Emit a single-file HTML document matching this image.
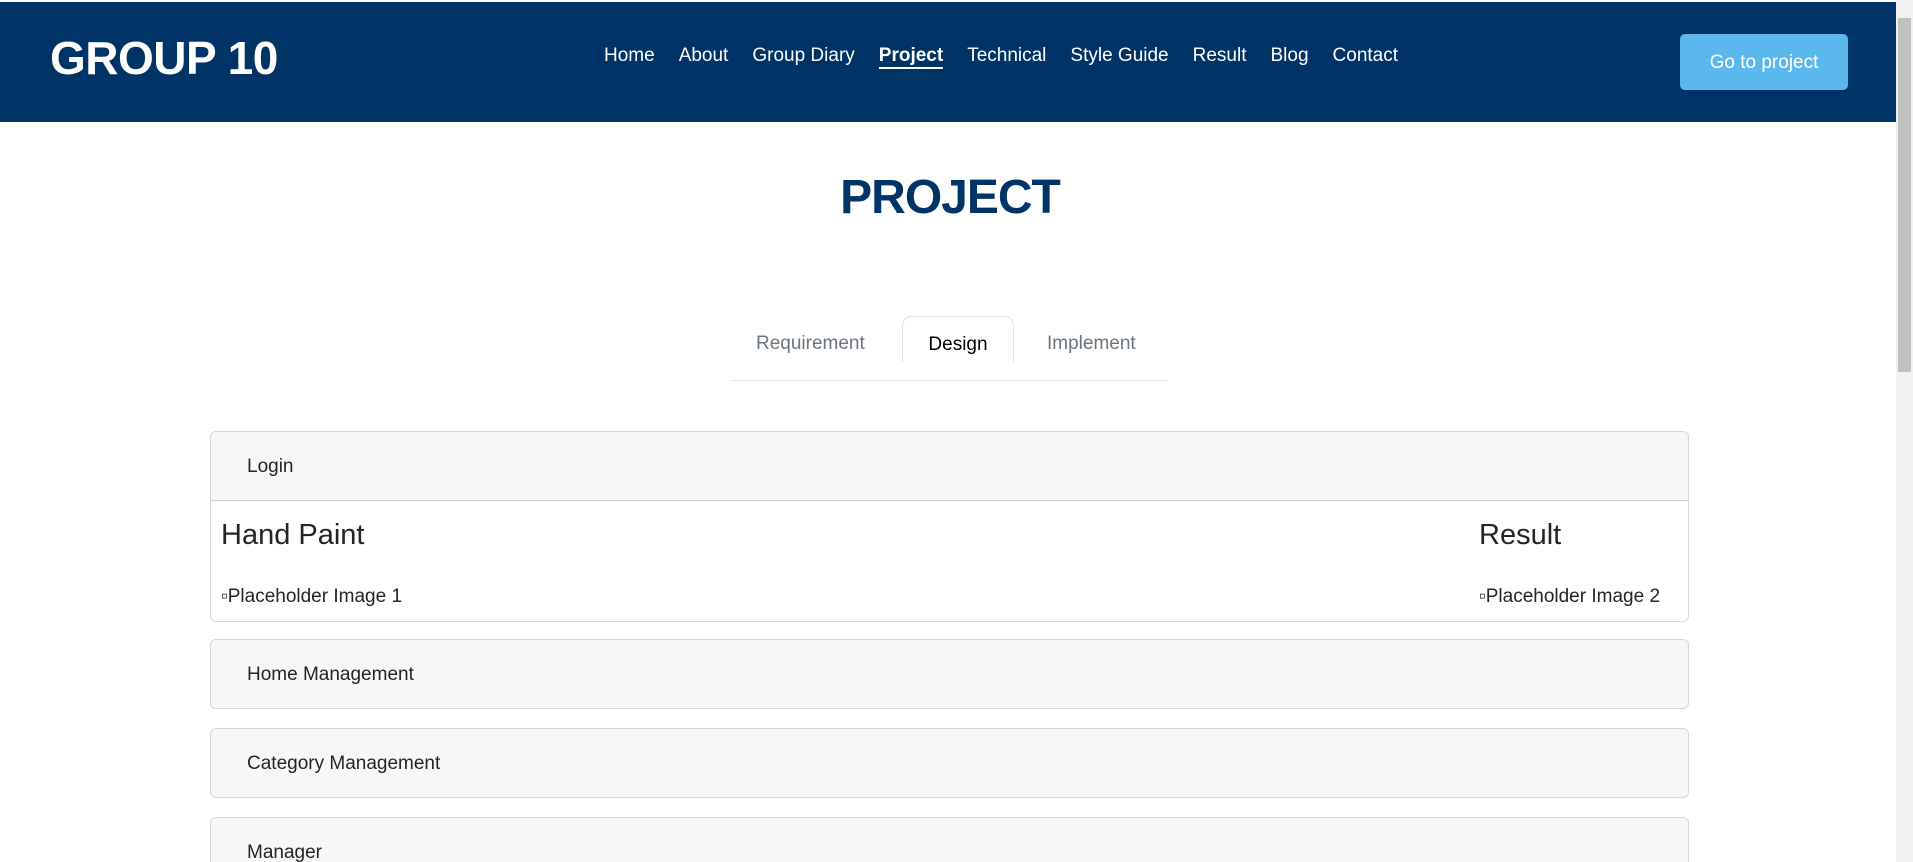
<!DOCTYPE html>
<html><head><meta charset="utf-8"><style>
*{box-sizing:border-box;margin:0;padding:0}
html,body{width:1913px;height:862px;overflow:hidden;background:#fff;font-family:"Liberation Sans",sans-serif;color:#212529}
.hdr{position:absolute;top:2px;left:0;width:1900px;height:120px;background:#003366}
.logo{position:absolute;left:50px;top:29px;font-size:46px;font-weight:bold;color:#fff;letter-spacing:-0.5px}
.nav{position:absolute;top:43px;left:604px;font-size:19px;color:#fff;white-space:nowrap}
.nav span{margin-right:24px}
.nav .act{font-weight:bold;border-bottom:2px solid #fff;padding-bottom:1px}
.btn{position:absolute;left:1680px;top:32px;width:168px;height:56px;background:#5bb8ec;border-radius:5px;color:#fff;font-size:19px;text-align:center;line-height:58px}
.sb{position:absolute;right:0;top:0;width:17px;height:862px;background:#f1f1f1}
.sb .th{position:absolute;left:2px;top:18px;width:13px;height:354px;background:#c1c1c1}
h1{position:absolute;top:170px;left:0;width:1900px;text-align:center;font-size:48px;color:#003366;font-weight:bold;letter-spacing:-1px}
.tabs{position:absolute;left:731px;top:316px;width:437px;height:65px;border-bottom:1px solid #dee2e6}
.tab{position:absolute;top:0;height:46px;line-height:56px;font-size:19px;color:#6c757d}
.tab.a{left:171px;width:112px;text-align:center;color:#000;border:1px solid #dee2e6;border-bottom:none;border-radius:9px 9px 0 0}
.acc{position:absolute;left:210px;width:1479px;border:1px solid #d6d6d6;border-radius:6px;background:#f7f7f7;font-size:19px}
.acc .h{height:68px;line-height:70px;padding-left:36px}
.body{background:#fff;border-top:1px solid #d0d0d0;height:121px;position:relative;border-radius:0 0 6px 6px}
.body .t{position:absolute;top:18px;font-size:29px}
.body .p{position:absolute;top:85px;font-size:19px}
</style></head><body>
<div class="hdr">
<div class="logo">GROUP 10</div>
<div class="nav"><span>Home</span><span>About</span><span>Group Diary</span><span class="act">Project</span><span>Technical</span><span>Style Guide</span><span>Result</span><span>Blog</span><span>Contact</span></div>
<div class="btn">Go to project</div>
</div>
<div class="sb"><div class="th"></div></div>
<h1>PROJECT</h1>
<div class="tabs">
<div class="tab" style="left:25px">Requirement</div>
<div class="tab a">Design</div>
<div class="tab" style="left:316px">Implement</div>
</div>
<div class="acc" style="top:431px"><div class="h">Login</div>
<div class="body"><div class="t" style="left:10px">Hand Paint</div><div class="t" style="left:1268px">Result</div>
<div class="p" style="left:10px">▫Placeholder Image 1</div><div class="p" style="left:1268px">▫Placeholder Image 2</div></div></div>
<div class="acc" style="top:639px;height:70px"><div class="h">Home Management</div></div>
<div class="acc" style="top:728px;height:70px"><div class="h">Category Management</div></div>
<div class="acc" style="top:817px;height:45px;border-bottom:none;border-radius:6px 6px 0 0;overflow:hidden"><div class="h">Manager</div></div>
</body></html>
